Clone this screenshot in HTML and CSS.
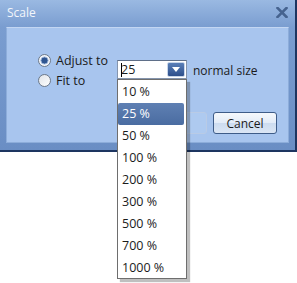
FILE: index.html
```html
<!DOCTYPE html>
<html lang="en">
<head>
  <meta charset="UTF-8" />
  <title>Scale</title>
  <link rel="stylesheet" href="styles.css">
</head>
<body>
  <div class="window">
    <div class="titlebar">
      <span class="title">Scale</span>
      <svg class="close" width="12" height="11" viewBox="0 0 12 11">
        <path d="M1.5 1 L10.5 10 M10.5 1 L1.5 10" stroke="#46638f" stroke-width="2.6" stroke-linecap="square"/>
      </svg>
    </div>

    <div class="panel">
      <div class="choice-row">
        <div class="radios">
          <label class="radio">
            <svg width="13" height="13" viewBox="0 0 13 13">
              <circle cx="6.5" cy="6.5" r="6" fill="#f4f6f9" stroke="#6b7889"/>
              <circle cx="6.5" cy="6.5" r="3.6" fill="#2f5590" stroke="#9fb8dc" stroke-width="1"/>
            </svg>
            Adjust to
          </label>
          <label class="radio">
            <svg width="13" height="13" viewBox="0 0 13 13">
              <defs>
                <linearGradient id="rg" x1="0" y1="0" x2="1" y2="1">
                  <stop offset="0" stop-color="#dfe3e8"/>
                  <stop offset="1" stop-color="#ffffff"/>
                </linearGradient>
              </defs>
              <circle cx="6.5" cy="6.5" r="6" fill="url(#rg)" stroke="#6b7889"/>
            </svg>
            Fit to
          </label>
        </div>

        <div class="combo">
          <span class="combo-text"><span class="caret"></span>25</span>
          <span class="combo-btn">
            <svg width="8" height="5" viewBox="0 0 8 5"><path d="M0 0 H8 L4 5 Z" fill="#fff"/></svg>
          </span>
        </div>
        <span class="suffix">normal size</span>
      </div>

      <div class="buttons">
        <button class="btn btn-ok">OK</button>
        <button class="btn">Cancel</button>
      </div>
    </div>
  </div>

  <ul class="dropdown">
    <li>10 %</li>
    <li class="selected">25 %</li>
    <li>50 %</li>
    <li>100 %</li>
    <li>200 %</li>
    <li>300 %</li>
    <li>500 %</li>
    <li>700 %</li>
    <li>1000 %</li>
  </ul>
</body>
</html>
```

FILE: styles.css
```css
body {
  margin: 0;
  background: #ffffff;
  font-family: "Open Sans", "Noto Sans", sans-serif;
  font-size: 12px;
  color: #1b1b1b;
}

.window {
  width: 297px;
  height: 152px;
  box-sizing: border-box;
  padding: 0 6px 7px 6px;
  background: linear-gradient(to bottom, #9ab9e2 0, #7a9dd0 27px, #6a8ec4 100%);
  border-right: 2px solid #1d3560;
  border-bottom: 2px solid #1d3560;
  display: flex;
  flex-direction: column;
}

.titlebar {
  height: 27px;
  display: flex;
  align-items: center;
  justify-content: space-between;
  padding: 0 1px 2px 1px;
  box-sizing: border-box;
}

.title {
  color: #f3f6fb;
  font-size: 12px;
}

.panel {
  flex: 1;
  background: #a8c5ee;
  border: 1px solid #8dadda;
  border-top-color: #c3d6f2;
  padding: 22px 11px 8px 31px;
  display: flex;
  flex-direction: column;
}

.choice-row {
  display: flex;
  align-items: flex-start;
}

.radios {
  width: 79px;
  display: flex;
  flex-direction: column;
}

.radio {
  height: 20px;
  display: flex;
  align-items: center;
  gap: 5px;
  font-size: 12.5px;
}

.combo {
  margin-top: 10px;
  width: 70px;
  height: 19px;
  box-sizing: border-box;
  background: #ffffff;
  border: 1px solid #8595ad;
  border-top-color: #5f6f88;
  display: flex;
  align-items: center;
  justify-content: space-between;
  padding: 0 1px 0 3px;
}

.combo-text {
  font-size: 12.5px;
  display: flex;
  align-items: center;
}

.caret {
  width: 1px;
  height: 14px;
  background: #000;
  margin-right: -1px;
}

.combo-btn {
  width: 18px;
  height: 15px;
  border-radius: 2px;
  background: linear-gradient(to bottom, #5a7fb8, #2d4f8b);
  border: 1px solid #c8d6ea;
  box-sizing: border-box;
  display: flex;
  align-items: center;
  justify-content: center;
}

.suffix {
  margin-top: 10px;
  margin-left: 6px;
  height: 19px;
  line-height: 22px;
  font-size: 12px;
}

.buttons {
  margin-top: auto;
  display: flex;
  justify-content: flex-end;
  gap: 6px;
}

.btn {
  width: 64px;
  height: 22px;
  font-family: inherit;
  font-size: 12px;
  color: #1b1b1b;
  border: 1px solid #3e5c88;
  border-radius: 3px;
  background: linear-gradient(to bottom, #f5f8fc 0, #e3ecf8 50%, #cddcf0 51%, #dbe6f5 100%);
  padding: 0;
}

.btn-ok {
  border-color: #b9cbe6;
  background: #aecaf0;
  color: #aecaf0;
}

.dropdown {
  position: absolute;
  left: 117px;
  top: 79px;
  width: 70px;
  height: 200px;
  box-sizing: border-box;
  margin: 0;
  padding: 1px 0 0 0;
  list-style: none;
  background: #ffffff;
  border: 1px solid #6e6e6e;
  box-shadow: 3px 3px 1px rgba(0, 0, 0, 0.25);
}

.dropdown li {
  height: 22px;
  line-height: 22px;
  padding-left: 4px;
  margin-right: 2px;
  font-size: 12.5px;
  color: #1b1b1b;
}

.dropdown li.selected {
  background: linear-gradient(to bottom, #5f80b3, #4a6ca1);
  color: #ffffff;
  border-radius: 2px;
}
```
